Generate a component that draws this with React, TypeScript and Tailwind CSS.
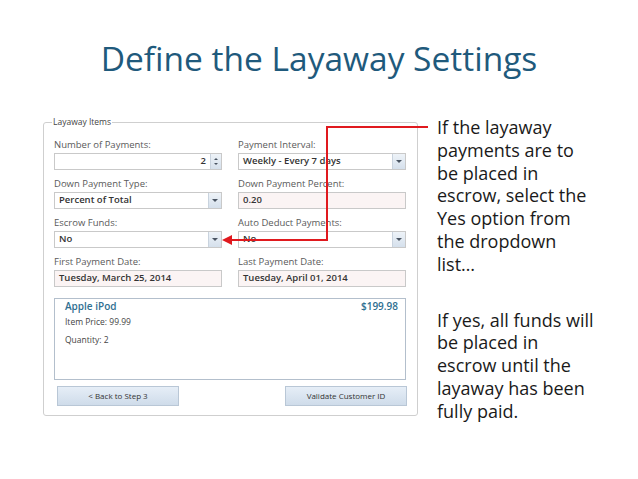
import React from 'react';

const ui = { fontFamily: '"Open Sans", "Noto Sans", sans-serif' };

function Label({ children }: { children: React.ReactNode }) {
  return <div className="h-[14px] leading-[14px] text-[9.5px] text-[#5a5a5a] mb-[1px]">{children}</div>;
}

function TextBox({ value, tinted }: { value: string; tinted?: boolean }) {
  return (
    <div
      className={`h-[17px] border border-[#c9c9c9] px-[4px] flex items-center text-[9.5px] font-semibold text-[#333] ${
        tinted ? 'bg-[#fbf4f4]' : 'bg-white'
      }`}
    >
      {value}
    </div>
  );
}

function SelectBox({ value }: { value: string }) {
  return (
    <div className="h-[17px] border border-[#c9c9c9] bg-white flex items-stretch">
      <div className="flex-1 px-[4px] flex items-center text-[9.5px] font-semibold text-[#333] overflow-hidden whitespace-nowrap">
        {value}
      </div>
      <div className="w-[13px] border-l border-[#c9d3de] bg-gradient-to-b from-[#eef3f8] to-[#d5e0ec] flex items-center justify-center">
        <div className="w-0 h-0 border-l-[3px] border-r-[3px] border-t-[3px] border-l-transparent border-r-transparent border-t-[#4a5563]" />
      </div>
    </div>
  );
}

function SpinBox({ value }: { value: string }) {
  return (
    <div className="h-[17px] border border-[#c9c9c9] bg-white flex items-stretch">
      <div className="flex-1 px-[4px] flex items-center justify-end text-[9.5px] font-semibold text-[#333]">{value}</div>
      <div className="w-[11px] border-l border-[#c9d3de] bg-gradient-to-b from-[#eef3f8] to-[#d5e0ec] flex flex-col items-center justify-center gap-[3px]">
        <div className="w-0 h-0 border-l-[2px] border-r-[2px] border-b-[2px] border-l-transparent border-r-transparent border-b-[#4a5563]" />
        <div className="w-0 h-0 border-l-[2px] border-r-[2px] border-t-[2px] border-l-transparent border-r-transparent border-t-[#4a5563]" />
      </div>
    </div>
  );
}

function Field({ label, children }: { label: string; children: React.ReactNode }) {
  return (
    <div className="mb-[7px]">
      <Label>{label}</Label>
      {children}
    </div>
  );
}

function Button({ children }: { children: React.ReactNode }) {
  return (
    <div className="w-[122px] h-[20px] border border-[#b9c7d6] bg-gradient-to-b from-[#e6eef7] to-[#cfdcea] flex items-center justify-center text-[8px] text-[#333]">
      {children}
    </div>
  );
}

const notes1 = ['If the layaway', 'payments are to', 'be placed in', 'escrow, select the', 'Yes option from', 'the dropdown', 'list…'];
const notes2 = ['If yes, all funds will', 'be placed in', 'escrow until the', 'layaway has been', 'fully paid.'];

export default function App() {
  return (
    <div className="relative w-[638px] h-[479px] bg-white overflow-hidden">
      <div className="h-[116px] pt-[36px]">
        <h1 className="text-center text-[33.5px] leading-[44px] text-[#1f5a7c]" style={{ fontFamily: '"Open Sans", sans-serif' }}>
          Define the Layaway Settings
        </h1>
      </div>

      <div className="flex items-start">
        <fieldset className="ml-[43px] w-[375px] border border-[#cfcfcf] rounded-[3px] pl-[10px] pr-[11px] pb-[9px]" style={ui}>
          <legend className="-ml-[2px] px-[1px] text-[8.5px] leading-[12px] text-[#444]">Layaway Items</legend>
          <div className="grid grid-cols-2 gap-x-[16px] pt-[10px]">
            <Field label="Number of Payments:">
              <SpinBox value="2" />
            </Field>
            <Field label="Payment Interval:">
              <SelectBox value="Weekly - Every 7 days" />
            </Field>
            <Field label="Down Payment Type:">
              <SelectBox value="Percent of Total" />
            </Field>
            <Field label="Down Payment Percent:">
              <TextBox value="0.20" tinted />
            </Field>
            <Field label="Escrow Funds:">
              <SelectBox value="No" />
            </Field>
            <Field label="Auto Deduct Payments:">
              <SelectBox value="No" />
            </Field>
            <Field label="First Payment Date:">
              <TextBox value="Tuesday, March 25, 2014" tinted />
            </Field>
            <Field label="Last Payment Date:">
              <TextBox value="Tuesday, April 01, 2014" tinted />
            </Field>
          </div>

          <div className="mt-[4px] h-[82px] border border-[#b3bfcc] pl-[10px] pr-[7px]">
            <div className="flex justify-between text-[10px] leading-[14px] font-semibold text-[#2f6f91]">
              <span>Apple iPod</span>
              <span>$199.98</span>
            </div>
            <div className="mt-[1px] text-[8.5px] leading-[16px] text-[#444]">Item Price: 99.99</div>
            <div className="text-[8.5px] leading-[19px] text-[#444]">Quantity: 2</div>
          </div>

          <div className="mt-[6px] flex justify-between pl-[3px] -mr-[1px]">
            <Button>&lt; Back to Step 3</Button>
            <Button>Validate Customer ID</Button>
          </div>
        </fieldset>

        <div className="ml-[19px] text-[18px] leading-[22.8px] text-[#1a1a1a] whitespace-nowrap" style={{ fontFamily: '"Open Sans", sans-serif' }}>
          {notes1.map((l) => (
            <div key={l}>{l}</div>
          ))}
          <div className="h-[33px]" />
          {notes2.map((l) => (
            <div key={l}>{l}</div>
          ))}
        </div>
      </div>

      <svg className="absolute left-0 top-0 pointer-events-none" width="638" height="479">
        <polyline points="428,127 327,127 327,240 230,240" fill="none" stroke="#e0191e" strokeWidth="2" />
        <polygon points="222,240 232,235 232,245" fill="#e0191e" />
      </svg>
    </div>
  );
}
